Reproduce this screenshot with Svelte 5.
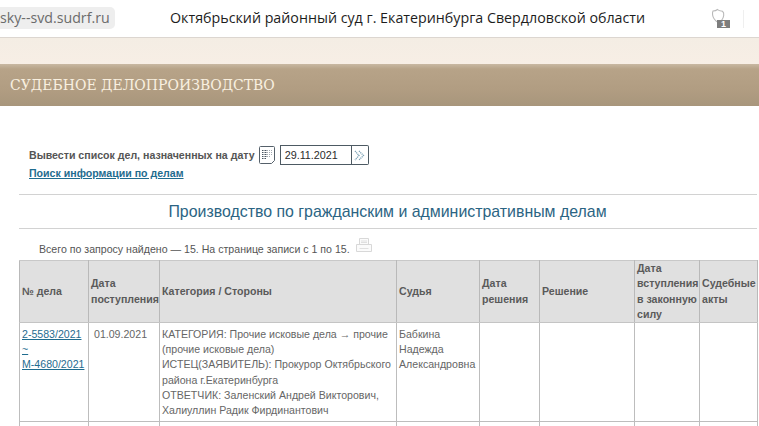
<script>
  const cols = [69, 71, 237, 83, 60, 95, 65, 58];
</script>

<div class="page">
  <header class="topbar">
    <div class="url">sky--svd.sudrf.ru</div>
    <div class="title">Октябрьский районный суд г. Екатеринбурга Свердловской области</div>
    <div class="shield">
      <svg width="22" height="22" viewBox="0 0 22 22" aria-hidden="true">
        <path d="M6.5 2.5 C7.5 3.6 9.5 4 11.5 4.2 C12.6 5 13 6.5 12.7 8.5 C12.3 11 10.5 14 7.5 15.8 C4.5 14 2 11 1.6 8 C1.4 6.5 1.5 5 2 4 C3.5 4 5.2 3.6 6.5 2.5 Z" fill="none" stroke="#b8b8b8" stroke-width="1.1"/>
        <rect x="6" y="13" width="13" height="8" fill="#7d7d7d"/>
      </svg>
      <span class="badge">1</span>
    </div>
    <div class="sep"></div>
  </header>
  <div class="band"></div>
  <div class="banner">СУДЕБНОЕ ДЕЛОПРОИЗВОДСТВО</div>

  <main class="content">
    <div class="filter">
      <div class="date-row">
        <span class="label">Вывести список дел, назначенных на дату</span>
        <span class="cal">
          <svg width="16" height="18" viewBox="0 0 16 18" aria-hidden="true">
            <path d="M0.5 1.5 Q0.5 0.5 1.5 0.5 H14.5 Q15.5 0.5 15.5 1.5 V14.5 L12.5 17.5 H1.5 Q0.5 17.5 0.5 16.5 Z" fill="#fff" stroke="#55606a"/>
            <path d="M3 4.5 H9 M3 6.5 H9 M3 8.5 H9 M3 10.5 H9 M3 12.5 H7" stroke="#4a5560" stroke-dasharray="1 0.5" fill="none"/>
            <path d="M10 4.5 H14 M10 6.5 H14 M10 8.5 H14 M10 10.5 H12" stroke="#a2a9b0" stroke-dasharray="1 1" fill="none"/>
          </svg>
        </span>
        <span class="dateinput">29.11.2021</span>
        <span class="go">
          <svg width="11" height="11" viewBox="0 0 11 11" aria-hidden="true">
            <path d="M1 1 L5 5.5 L1 10 M5 1 L9.5 5.5 L5 10" fill="none" stroke="#7ca2b6" stroke-width="1.3" stroke-dasharray="1.2 0.7"/>
          </svg>
        </span>
      </div>
      <a class="search" href="#top">Поиск информации по делам</a>
    </div>

    <h1 class="heading">Производство по гражданским и административным делам</h1>

    <div class="count">
      <span>Всего по запросу найдено — 15. На странице записи с 1 по 15.</span>
      <svg width="16" height="15" viewBox="0 0 16 15" aria-hidden="true">
        <path d="M3.5 6 V0.5 H12.5 V6 M0.5 6.5 H15.5 V13.5 H0.5 Z" fill="#fbfbfb" stroke="#d8d8d8"/>
        <path d="M5 3 H11 M5 4.5 H11 M3.5 10.5 H12.5" stroke="#e0e0e0" fill="none"/>
      </svg>
    </div>

    <table>
      <colgroup>
        {#each cols as w}<col style="width: {w}px" />{/each}
      </colgroup>
      <thead>
        <tr>
          <th>№ дела</th>
          <th>Дата поступления</th>
          <th>Категория / Стороны</th>
          <th>Судья</th>
          <th>Дата решения</th>
          <th>Решение</th>
          <th>Дата вступления в законную силу</th>
          <th>Судебные акты</th>
        </tr>
      </thead>
      <tbody>
        <tr>
          <td><a href="#top">2-5583/2021</a><br /><a href="#top">~</a><br /><a href="#top">М-4680/2021</a></td>
          <td class="date">01.09.2021</td>
          <td>КАТЕГОРИЯ: Прочие исковые дела → прочие<br />(прочие исковые дела)<br />ИСТЕЦ(ЗАЯВИТЕЛЬ): Прокурор Октябрьского<br />района г.Екатеринбурга<br />ОТВЕТЧИК: Заленский Андрей Викторович,<br />Халиуллин Радик Фирдинантович</td>
          <td>Бабкина Надежда Александровна</td>
          <td></td>
          <td></td>
          <td></td>
          <td></td>
        </tr>
        <tr class="next">
          <td></td><td></td><td></td><td></td><td></td><td></td><td></td><td></td>
        </tr>
      </tbody>
    </table>
  </main>
</div>

<style>
  :global(body) {
    margin: 0;
    background: #fff;
    overflow: hidden;
  }
  .page {
    width: 759px;
    height: 426px;
    overflow: hidden;
    font-family: "Liberation Sans", Arial, sans-serif;
    color: #555;
  }
  .topbar {
    height: 37px;
    display: flex;
    align-items: center;
    border-bottom: 1px solid #dcd6d0;
    box-sizing: content-box;
  }
  .url {
    width: 115px;
    height: 22px;
    margin-top: -2px;
    background: #eeeeee;
    border-radius: 0 5px 5px 0;
    color: #6b6b6b;
    font: 14.2px/22px "Open Sans", sans-serif;
    overflow: hidden;
    white-space: nowrap;
  }
  .title {
    margin-left: 55px;
    width: 520px;
    margin-top: -2px;
    color: #1d1d1d;
    font: 14.25px/22px "Open Sans", sans-serif;
    white-space: nowrap;
  }
  .shield {
    position: relative;
    margin-left: 21px;
    width: 22px;
    height: 22px;
    margin-top: -2px;
  }
  .shield svg {
    display: block;
  }
  .badge {
    position: absolute;
    left: 6px;
    top: 13px;
    width: 13px;
    text-align: center;
    color: #fff;
    font: bold 9px/8px "Liberation Sans", sans-serif;
  }
  .sep {
    width: 1px;
    height: 18px;
    margin-left: 10px;
    background: #efefef;
  }
  .band {
    height: 26px;
    background: linear-gradient(#f4ede4, #f7eee5);
  }
  .banner {
    height: 42px;
    box-sizing: border-box;
    padding: 12px 0 0 10px;
    background: linear-gradient(#c8b8a2 0, #b7a388 12%, #b19d82 60%, #a8967c 100%);
    color: #f9f0e0;
    font: 14px/18px "DejaVu Serif", "Liberation Serif", serif;
    white-space: nowrap;
  }
  .content {
    padding: 0 2px 0 19px;
  }
  .filter {
    height: 89px;
    box-sizing: border-box;
    padding: 39px 0 0 10px;
    border-bottom: 1px solid #d2d2d2;
  }
  .date-row {
    display: flex;
    align-items: center;
    height: 20px;
  }
  .label {
    font-size: 10.6px;
    font-weight: bold;
    color: #555;
    white-space: nowrap;
  }
  .cal {
    display: flex;
    margin-left: 4px;
  }
  .dateinput {
    box-sizing: border-box;
    margin-left: 5px;
    width: 72px;
    height: 20px;
    padding-left: 4px;
    border: 1px solid #4d5a63;
    color: #2b2b2b;
    font-size: 10.8px;
    line-height: 18px;
  }
  .go {
    box-sizing: border-box;
    display: flex;
    align-items: center;
    justify-content: center;
    width: 17px;
    height: 20px;
    border: 1px solid #4d5a63;
    border-left: 0;
    border-radius: 0 2px 2px 0;
  }
  .search {
    display: block;
    margin-top: 1px;
    font-size: 10.6px;
    line-height: 14px;
    font-weight: bold;
    color: #1f6c8f;
    text-decoration: underline;
    white-space: nowrap;
  }
  .heading {
    margin: 0;
    height: 34px;
    box-sizing: border-box;
    border-bottom: 1px solid #d2d2d2;
    text-align: center;
    color: #2b6483;
    font-size: 15.9px;
    line-height: 33px;
    font-weight: normal;
    white-space: nowrap;
    padding-right: 1px;
  }
  .count {
    height: 31px;
    display: flex;
    align-items: flex-end;
    gap: 6px;
    padding-left: 20px;
    box-sizing: border-box;
    font-size: 10.6px;
    line-height: 13px;
    color: #555;
  }
  .count span {
    padding-bottom: 4px;
  }
  .count svg {
    margin-bottom: 7px;
  }
  table {
    table-layout: fixed;
    width: 738px;
    border-collapse: collapse;
    font-size: 10.6px;
    line-height: 15.2px;
    color: #666;
  }
  th {
    height: 62px;
    padding: 0 1px 0 2px;
    background: #e0e0e0;
    border: 1px solid #b9b9b9;
    border-color: #c8c8c8 #b9b9b9 #c4c4c4;
    text-align: left;
    font-weight: bold;
    color: #5a5a5a;
    box-sizing: border-box;
  }
  td {
    height: 99px;
    padding: 4px 1px 0 2px;
    border: 1px solid #bdbdbd;
    vertical-align: top;
    box-sizing: border-box;
    overflow: hidden;
    white-space: normal;
  }
  td a {
    color: #1f6c8f;
    text-decoration: underline;
  }
  td.date {
    padding-left: 5px;
  }
  .next td {
    height: 30px;
  }
</style>
